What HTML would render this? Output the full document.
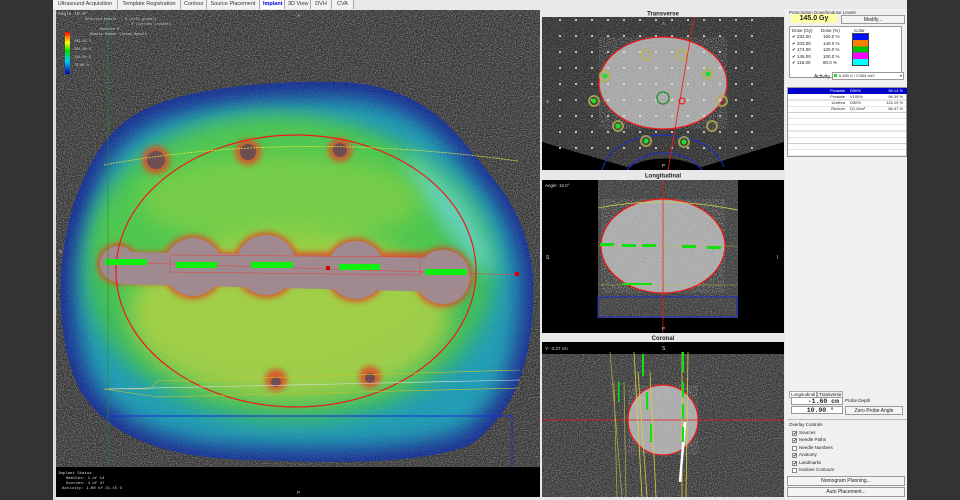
<!DOCTYPE html>
<html><head><meta charset="utf-8"><style>
*{margin:0;padding:0;box-sizing:border-box}
body{width:960px;height:500px;background:#333;position:relative;overflow:hidden;font-family:"Liberation Sans",sans-serif;font-size:6px;color:#222}
.abs{position:absolute}
#app{left:53px;top:0;width:854px;height:500px;background:#e8e8e8}
.tab{position:absolute;top:0;height:9px;font-size:5.5px;line-height:9px;border-right:1px solid #aaa;padding:0 3px;color:#333;background:#f2f2f2;white-space:nowrap;overflow:hidden;text-align:center}
#panel{left:785px;top:9px;width:122px;height:491px;background:#f0f0f0}
.t{position:absolute;white-space:nowrap}
.box{position:absolute;border:1px solid #999;background:#fff}
.btn{position:absolute;border:1px solid #999;background:#f4f4f4;text-align:center;font-size:5px;white-space:nowrap}
.cb{position:absolute;width:5px;height:5px;border:1px solid #888;background:#fff;font-size:5px;line-height:4px;text-align:center}
</style></head><body>
<div id="app" class="abs"></div>
<div class="tab" style="left:53px;width:65px">Ultrasound Acquisition</div>
<div class="tab" style="left:118px;width:63px">Template Registration</div>
<div class="tab" style="left:181px;width:26px">Contour</div>
<div class="tab" style="left:207px;width:53px">Source Placement</div>
<div class="tab" style="left:260px;width:25px;color:#0000e0;font-weight:bold;background:#fff">Implant</div>
<div class="tab" style="left:285px;width:26px">3D View</div>
<div class="tab" style="left:311px;width:21px">DVH</div>
<div class="tab" style="left:332px;width:22px">CVA</div>

<svg class="abs" style="left:0;top:0" width="960" height="500" viewBox="0 0 960 500">
<defs>
<filter id="nz" x="0" y="0" width="100%" height="100%"><feTurbulence type="fractalNoise" baseFrequency="0.85" numOctaves="2" seed="5"/><feColorMatrix type="matrix" values="0 0 0 0 1  0 0 0 0 1  0 0 0 0 1  2.2 0 0 0 -0.9"/></filter>
<filter id="b8"><feGaussianBlur stdDeviation="10"/></filter>
<filter id="b5"><feGaussianBlur stdDeviation="5"/></filter>
<filter id="b3"><feGaussianBlur stdDeviation="3"/></filter>
<linearGradient id="cbar" x1="0" y1="0" x2="0" y2="1"><stop offset="0" stop-color="#f00"/><stop offset=".25" stop-color="#ff0"/><stop offset=".45" stop-color="#0d0"/><stop offset=".7" stop-color="#0cf"/><stop offset="1" stop-color="#00a"/></linearGradient>
<clipPath id="cm"><rect x="56" y="10" width="484" height="487"/></clipPath>
<clipPath id="blob"><path d="M130,118 C170,90 260,80 340,82 C400,84 440,110 470,150 C500,185 530,220 533,280 C535,350 520,410 470,445 C420,465 330,463 250,460 C170,458 110,440 80,390 C55,340 55,260 75,200 C90,160 105,135 130,118Z"/></clipPath>
</defs>
<g clip-path="url(#cm)">
<rect x="56" y="10" width="484" height="487" fill="#363636"/>
<rect x="56" y="10" width="484" height="487" filter="url(#nz)" opacity=".35"/>
<g clip-path="url(#blob)">
<rect x="50" y="70" width="500" height="400" fill="#182a96" opacity=".92"/>
<path d="M138,132 C178,104 262,96 340,98 C396,100 432,124 460,160 C490,193 518,229 520,283 C521,346 508,398 463,431 C416,450 330,450 251,447 C178,445 121,428 94,384 C70,339 70,263 89,208 C102,168 115,146 138,132Z" fill="#1a9ab2" filter="url(#b8)"/>
<ellipse cx="290" cy="272" rx="205" ry="150" fill="#3cbc56" filter="url(#b8)"/>
<ellipse cx="270" cy="240" rx="175" ry="125" fill="#50c848" filter="url(#b8)" opacity=".8"/>
<path d="M400,150 C445,175 485,220 495,275 L475,265 C450,230 420,195 400,150Z" fill="#70d8e0" filter="url(#b8)" opacity=".8"/>
<ellipse cx="290" cy="315" rx="160" ry="85" fill="#b2d040" filter="url(#b8)" opacity=".8"/>
<ellipse cx="280" cy="200" rx="140" ry="45" fill="#8cd040" filter="url(#b8)" opacity=".6"/>
</g>
<rect x="56" y="10" width="484" height="487" filter="url(#nz)" opacity=".12"/>
<g fill="#e04a28" filter="url(#b3)" opacity=".85">
<circle cx="156" cy="160" r="14"/><circle cx="248" cy="152" r="13"/><circle cx="340" cy="150" r="12"/>
<circle cx="276" cy="380" r="11"/><circle cx="370" cy="377" r="11"/>
<circle cx="118" cy="264" r="21"/><circle cx="193" cy="267" r="32"/><circle cx="266" cy="265" r="33"/><circle cx="356" cy="270" r="32"/><circle cx="443" cy="277" r="30"/>
<rect x="118" y="252" width="325" height="32"/>
</g>
<g fill="#6e4e52">
<circle cx="156" cy="160" r="9"/><circle cx="248" cy="152" r="8"/><circle cx="340" cy="150" r="7"/>
<circle cx="276" cy="382" r="5"/><circle cx="370" cy="378" r="5"/>
</g>
<g fill="#a08a90">
<circle cx="118" cy="264" r="18"/><circle cx="193" cy="267" r="29"/><circle cx="266" cy="265" r="30"/><circle cx="356" cy="270" r="29"/><circle cx="443" cy="277" r="27"/>
<path d="M118,252 L443,258 L443,292 L118,284Z"/>
</g>
<ellipse cx="296" cy="271" rx="180" ry="136" fill="none" stroke="#f01818" stroke-width="1.2"/>
<path d="M104,165 Q290,130 518,161" fill="none" stroke="#e0e040" stroke-width=".8" stroke-dasharray="2 1"/>
<path d="M104,389 L150,389 L158,381 L520,370 M158,397 L520,388 M104,389 L158,397" fill="none" stroke="#c8c030" stroke-width=".6"/>
<path d="M106,389 L520,380" stroke="#ddd" stroke-width=".6"/>
<path d="M170,255 L420,257 L420,275 L170,272Z M106,262 L520,275" fill="none" stroke="#e04040" stroke-width=".5"/>
<g fill="#10f010">
<rect x="105" y="259" width="42" height="6"/><rect x="176" y="262" width="41" height="6"/><rect x="251" y="262" width="42" height="6"/><rect x="339" y="264" width="41" height="6"/><rect x="425" y="269" width="42" height="6"/>
</g>
<rect x="326" y="266" width="4" height="4" fill="#c00"/><rect x="515" y="272" width="4" height="4" fill="#c00"/>
<rect x="108" y="416" width="404" height="57" fill="none" stroke="#1c2cd0" stroke-width="1"/>
<line x1="108" y1="10" x2="108" y2="497" stroke="#2a8a2a" stroke-width=".6"/>
<rect x="56" y="467" width="484" height="30" fill="#000"/>
<rect x="65" y="32" width="5" height="42" fill="url(#cbar)"/>
<text x="58" y="15" fill="#ccc" font-size="4.5" font-family="Liberation Mono">Angle  10.0°</text>
<text x="85" y="20" fill="#ccc" font-size="3.5" font-family="Liberation Mono">Selected Needle   -- 0 (0/13 global)</text>
<text x="125" y="25" fill="#ccc" font-size="3.5" font-family="Liberation Mono">-- 0 (current cluster)</text>
<text x="100" y="30" fill="#ccc" font-size="3.5" font-family="Liberation Mono">Sources   0</text>
<text x="90" y="35" fill="#ccc" font-size="3.5" font-family="Liberation Mono">Needle Number   Closed Needle</text>
<g fill="#ccc" font-size="3.5" font-family="Liberation Mono"><text x="74" y="42">203.25 G</text><text x="74" y="50">203.00 G</text><text x="74" y="58">116.00 G</text><text x="74" y="66">70.00 G</text></g>
<text x="297" y="17" fill="#ccc" font-size="4.5">A</text><text x="297" y="494" fill="#ccc" font-size="4.5">P</text>
<text x="59" y="253" fill="#ccc" font-size="4.5">S</text>
<g fill="#ddd" font-size="4" font-family="Liberation Mono"><text x="58" y="474">Implant Status</text><text x="66" y="479">Needles:  1 of 13</text><text x="66" y="484">Sources:  4 of 47</text><text x="62" y="489">Activity: 1.80 of 21.15 U</text></g>
</g>
<rect x="53" y="9" width="3" height="491" fill="#ddd"/>
<g>
<rect x="541" y="9" width="244" height="491" fill="#e8e8e8"/>
<text x="663" y="15.5" font-size="6" text-anchor="middle" font-weight="bold" fill="#222">Transverse</text>
<text x="663" y="177.5" font-size="6" text-anchor="middle" font-weight="bold" fill="#222">Longitudinal</text>
<text x="663" y="340" font-size="6" text-anchor="middle" font-weight="bold" fill="#222">Coronal</text>
<svg x="542" y="17" width="242" height="153"><rect width="242" height="153" fill="#333"/><rect width="242" height="153" filter="url(#nz)" opacity=".3"/>
<path d="M0,125 L85,150 L85,153 L0,153Z M242,125 L160,150 L160,153 L242,153Z" fill="#000"/>
<path d="M80,153 Q121,130 165,153Z" fill="#000"/>
<ellipse cx="121" cy="66" rx="64" ry="46" fill="#a4a4a4"/><ellipse cx="121" cy="66" rx="64" ry="46" filter="url(#nz)" opacity=".3"/>
<ellipse cx="121" cy="66" rx="64" ry="46" fill="none" stroke="#f01818" stroke-width="1.2"/>
<path d="M60,153 Q70,120 121,118 Q170,120 182,150" fill="none" stroke="#1c2cd0" stroke-width="1"/>
<path d="M85,153 Q100,135 121,136 Q145,135 160,153" fill="none" stroke="#1c2cd0" stroke-width="1"/>
<g id="dots" fill="#e8e8e8">
<circle cx="18" cy="3" r="1"/><circle cx="34" cy="3" r="1"/><circle cx="50" cy="3" r="1"/><circle cx="66" cy="3" r="1"/><circle cx="82" cy="3" r="1"/><circle cx="98" cy="3" r="1"/><circle cx="114" cy="3" r="1"/><circle cx="130" cy="3" r="1"/><circle cx="146" cy="3" r="1"/><circle cx="162" cy="3" r="1"/><circle cx="178" cy="3" r="1"/><circle cx="194" cy="3" r="1"/><circle cx="210" cy="3" r="1"/>
</g>
<use href="#dots" y="16"/><use href="#dots" y="32"/><use href="#dots" y="48"/><use href="#dots" y="64"/><use href="#dots" y="80"/><use href="#dots" y="96"/><use href="#dots" y="112"/><use href="#dots" y="128"/>
<g fill="none" stroke="#b8b050" stroke-width="2" opacity=".8"><circle cx="104" cy="38" r="5"/><circle cx="140" cy="38" r="5"/><circle cx="63" cy="59" r="5"/><circle cx="166" cy="57" r="5"/><circle cx="52" cy="84" r="5"/><circle cx="180" cy="84" r="5"/><circle cx="76" cy="109" r="5"/><circle cx="170" cy="109" r="5"/><circle cx="104" cy="124" r="5"/><circle cx="142" cy="125" r="5"/></g>
<g fill="#2d2"><circle cx="63" cy="59" r="2.5"/><circle cx="166" cy="57" r="2.5"/><circle cx="52" cy="84" r="2.5"/><circle cx="104" cy="124" r="2.5"/><circle cx="142" cy="125" r="2.5"/><circle cx="76" cy="109" r="2.5"/></g>
<circle cx="121" cy="81" r="6" fill="none" stroke="#1a8a1a" stroke-width="1.2"/>
<circle cx="140" cy="84" r="3" fill="none" stroke="#f01818" stroke-width="1.2"/>
<line x1="152" y1="0" x2="126" y2="153" stroke="#f01818" stroke-width=".8"/>
<text x="120" y="150" font-size="4.5" fill="#eee">P</text><text x="4" y="86" font-size="4.5" fill="#ccc">S</text><text x="120" y="8" font-size="4.5" fill="#ccc">A</text>
</svg>
<svg x="542" y="180" width="242" height="153"><rect width="242" height="153" fill="#000"/>
<rect x="56" y="0" width="140" height="138" fill="#3e3e3e"/><rect x="56" y="0" width="140" height="138" filter="url(#nz)" opacity=".35"/>
<ellipse cx="121" cy="66" rx="62" ry="47" fill="#a8a8a8"/><ellipse cx="121" cy="66" rx="62" ry="47" filter="url(#nz)" opacity=".3"/>
<ellipse cx="121" cy="66" rx="62" ry="47" fill="none" stroke="#f01818" stroke-width="1.2"/>
<path d="M56,28 Q121,15 196,30" fill="none" stroke="#d0d040" stroke-width=".8"/>
<path d="M56,66 L196,66 M56,105 L196,105" stroke="#c8c030" stroke-width=".6" opacity=".8"/>
<g fill="#10e010"><rect x="58" y="63" width="14" height="3"/><rect x="80" y="64" width="14" height="3"/><rect x="100" y="64" width="14" height="3"/><rect x="140" y="65" width="14" height="3"/><rect x="165" y="66" width="14" height="3"/><rect x="80" y="103" width="30" height="2"/></g>
<rect x="56" y="117" width="139" height="20" fill="none" stroke="#1c2cd0" stroke-width="1"/>
<line x1="121" y1="0" x2="121" y2="153" stroke="#f01818" stroke-width=".7"/>
<text x="3" y="7" font-size="4.5" fill="#ddd">Angle: 10.0°</text><text x="4" y="79" font-size="5" fill="#ddd">S</text><text x="235" y="79" font-size="5" fill="#ddd">I</text><text x="120" y="150" font-size="4.5" fill="#ddd">P</text>
</svg>
<svg x="542" y="342" width="242" height="155"><rect width="242" height="155" fill="#3a3a3a"/><rect width="242" height="155" filter="url(#nz)" opacity=".4"/>
<rect width="242" height="12" fill="#000"/>
<circle cx="121" cy="78" r="35" fill="#a8a8a8"/><circle cx="121" cy="78" r="35" filter="url(#nz)" opacity=".3"/>
<circle cx="121" cy="78" r="35" fill="none" stroke="#f01818" stroke-width="1.2"/>
<line x1="0" y1="78" x2="242" y2="78" stroke="#f01818" stroke-width=".8"/>
<path d="M68,10 L80,155 M72,40 L75,155 M82,40 L84,155" fill="none" stroke="#b8b040" stroke-width=".7"/>
<path d="M92,10 L100,155 M96,30 L105,155 M108,30 L114,155" fill="none" stroke="#d8d040" stroke-width=".8"/>
<path d="M140,10 L140,155 M146,10 L144,155" fill="none" stroke="#d8d040" stroke-width=".8"/>
<path d="M143,80 L138,140" stroke="#fff" stroke-width="2.5"/>
<g fill="#10e010"><rect x="100" y="12" width="2" height="22"/><rect x="104" y="50" width="2" height="18"/><rect x="108" y="82" width="2" height="18"/><rect x="140" y="10" width="2" height="20"/><rect x="140" y="40" width="2" height="15"/><rect x="140" y="62" width="2" height="15"/><rect x="140" y="85" width="2" height="15"/><rect x="76" y="40" width="1.5" height="20"/></g>
<text x="3" y="8" font-size="4.5" fill="#ddd">Y: -3.27 cm</text><text x="120" y="8" font-size="5" fill="#ddd">S</text>
</svg>
</g>
</svg>

<div id="panel" class="abs">
<div class="t" style="left:4px;top:1px;font-size:4.5px;color:#333">Prescription Dose/Isodose Levels</div>
<div class="abs" style="left:6px;top:5px;width:46px;height:9px;background:#ffffa8;font-weight:bold;font-size:7px;text-align:center;line-height:9px">145.0 Gy</div>
<div class="btn" style="left:56px;top:6px;width:64px;height:9px;line-height:8px">Modify...</div>
<div class="box" style="left:4px;top:17px;width:113px;height:52px"></div>
<div class="t" style="left:7px;top:19px;font-size:4.5px">Dose (Gy)</div><div class="t" style="left:36px;top:19px;font-size:4.5px">Dose (%)</div><div class="t" style="left:69px;top:19px;font-size:4.5px">Color</div>
<div class="t" style="left:7px;top:25px;line-height:6.6px;font-size:4.5px">✔ 232.00<br>✔ 203.00<br>✔ 174.00<br>✔ 145.00<br>✔ 116.00</div>
<div class="t" style="left:38px;top:25px;line-height:6.6px;font-size:4.5px">160.0 %<br>140.0 %<br>120.0 %<br>100.0 %<br>80.0 %</div>
<div class="abs" style="left:67px;top:24px;width:17px;height:33px;border:1px solid #444;background:linear-gradient(#0010ff 0 20%,#ff8000 20% 40%,#00c000 40% 60%,#ff00ff 60% 80%,#00ffff 80%)"></div>
<div class="t" style="left:29px;top:65px;font-size:5px">Activity</div>
<div class="box" style="left:47px;top:63px;width:72px;height:8px;font-size:4px;line-height:6px;padding-left:6px">0.450 U / 0.304 mCi<span style="position:absolute;left:1px;top:1px;width:3px;height:3px;background:#2d2"></span><span style="position:absolute;right:1px;top:0">▾</span></div>
<div class="box" style="left:2px;top:78px;width:120px;height:70px;background:#fff;background-image:repeating-linear-gradient(#fff 0 5.5px,#ccc 5.5px 6.2px)"></div>
<div class="abs" style="left:3px;top:79px;width:119px;height:6px;background:#0000c8"></div>
<div class="t" style="right:62px;top:79px;line-height:6px;text-align:right;font-size:4px"><span style="color:#fff">Prostate</span><br>Prostate<br>Urethra<br>Rectum</div>
<div class="t" style="left:65px;top:79px;line-height:6px;font-size:4px"><span style="color:#fff">D90%</span><br>V100%<br>D30%<br>D1.0cm³</div>
<div class="t" style="right:4px;top:79px;line-height:6px;text-align:right;font-size:4px"><span style="color:#fff">96.14 %</span><br>96.39 %<br>124.19 %<br>66.47 %</div>
<div class="t" style="left:4px;top:382px;font-size:4.5px;border:1px solid #aaa;padding:0 1px;background:#fff">Longitudinal</div><div class="t" style="left:32px;top:382px;font-size:4.5px;border:1px solid #aaa;padding:0 1px">Transverse</div>
<div class="box" style="left:6px;top:388px;width:52px;height:8px;font-family:'Liberation Mono';font-size:6.5px;text-align:right;line-height:7px;padding-right:3px;font-weight:bold">-1.60 cm</div>
<div class="t" style="left:60px;top:389px;font-size:4.5px">Probe Depth</div>
<div class="box" style="left:6px;top:397px;width:52px;height:8px;font-family:'Liberation Mono';font-size:6.5px;text-align:right;line-height:7px;padding-right:8px;font-weight:bold">10.00 °</div>
<div class="btn" style="left:60px;top:397px;width:58px;height:9px;line-height:8px">Zero Probe Angle</div>
<div class="abs" style="left:2px;top:410px;width:120px;height:1px;background:#bbb"></div>
<div class="t" style="left:4px;top:413px;font-size:4.5px">Overlay Controls</div>
<div class="cb" style="left:7px;top:422px">✔</div><div class="t" style="left:14px;top:421px;font-size:4.5px">Sources</div>
<div class="cb" style="left:7px;top:429px">✔</div><div class="t" style="left:14px;top:428px;font-size:4.5px">Needle Paths</div>
<div class="cb" style="left:7px;top:437px"></div><div class="t" style="left:14px;top:436px;font-size:4.5px">Needle Numbers</div>
<div class="cb" style="left:7px;top:444px">✔</div><div class="t" style="left:14px;top:443px;font-size:4.5px">Anatomy</div>
<div class="cb" style="left:7px;top:452px">✔</div><div class="t" style="left:14px;top:451px;font-size:4.5px">Landmarks</div>
<div class="cb" style="left:7px;top:459px"></div><div class="t" style="left:14px;top:458px;font-size:4.5px">Isodose Contours</div>
<div class="btn" style="left:2px;top:467px;width:118px;height:10px;line-height:9px">Nomogram Planning...</div>
<div class="btn" style="left:2px;top:478px;width:118px;height:10px;line-height:9px">Auto Placement...</div>
</div>
</body></html>
